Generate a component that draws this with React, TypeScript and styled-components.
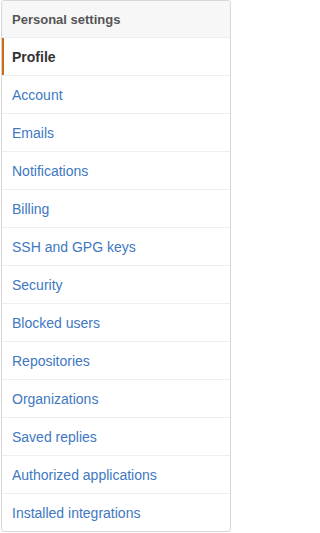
import * as React from 'react'
import styled, { createGlobalStyle } from 'styled-components'

const items = [
  'Account',
  'Emails',
  'Notifications',
  'Billing',
  'SSH and GPG keys',
  'Security',
  'Blocked users',
  'Repositories',
  'Organizations',
  'Saved replies',
  'Authorized applications',
  'Installed integrations'
]

export default function App() {
  return (
    <>
      <GlobalStyle />
      <Menu>
        <MenuHeading>Personal settings</MenuHeading>
        <MenuItem selected>Profile</MenuItem>
        {items.map(label => (
          <MenuItem key={label} href="#">
            {label}
          </MenuItem>
        ))}
      </Menu>
    </>
  )
}

const GlobalStyle = createGlobalStyle`
  body {
    margin: 0;
    background: #fff;
    font-family: "Liberation Sans", Arial, Helvetica, sans-serif;
    font-size: 14px;
    line-height: 1.5;
    color: #333;
  }
`

const Menu = styled.nav`
  margin: 0 1px;
  width: 230px;
  box-sizing: border-box;
  background: #fff;
  border: 1px solid #d8d8d8;
  border-radius: 3px;
`

const MenuHeading = styled.h3`
  display: block;
  margin: 0;
  padding: 9px 10px 7px;
  font-size: 13px;
  font-weight: bold;
  line-height: 20px;
  color: #555;
  background-color: #f7f7f7;
  border-bottom: 1px solid #eee;
  border-radius: 3px 3px 0 0;
`

const MenuItem = styled.a<{ selected?: boolean }>`
  position: relative;
  display: block;
  padding: 9px 10px 7px;
  line-height: 21px;
  color: ${p => (p.selected ? '#333' : '#4078c0')};
  font-weight: ${p => (p.selected ? 'bold' : 'normal')};
  text-decoration: none;
  border-bottom: 1px solid #eee;

  &:last-child {
    border-bottom: 0;
    border-radius: 0 0 3px 3px;
  }

  &::before {
    content: '';
    display: ${p => (p.selected ? 'block' : 'none')};
    position: absolute;
    top: 0;
    bottom: 0;
    left: 0;
    width: 2px;
    background-color: #d26911;
  }
`
